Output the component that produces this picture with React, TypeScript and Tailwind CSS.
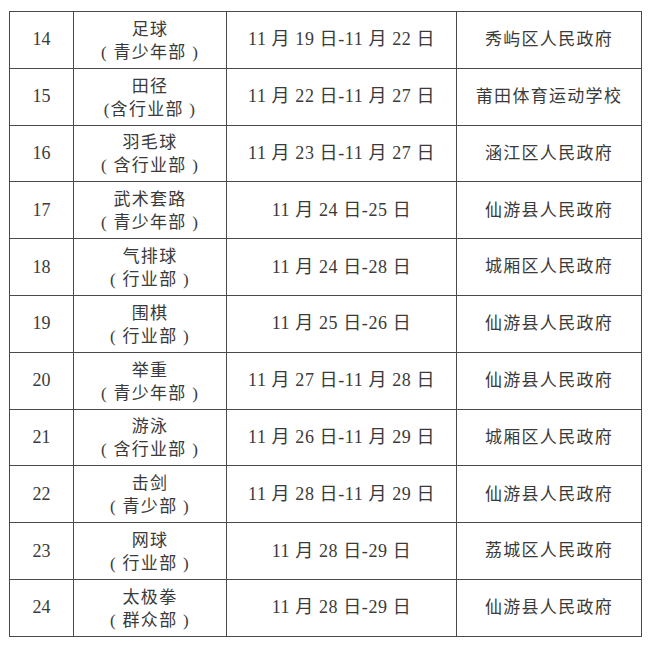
const rows: { no: string; name: string; group: string; date: string; venue: string }[] = [
  { no: '14', name: '足球', group: '( 青少年部 )', date: '11 月 19 日-11 月 22 日', venue: '秀屿区人民政府' },
  { no: '15', name: '田径', group: '(含行业部 )', date: '11 月 22 日-11 月 27 日', venue: '莆田体育运动学校' },
  { no: '16', name: '羽毛球', group: '( 含行业部 )', date: '11 月 23 日-11 月 27 日', venue: '涵江区人民政府' },
  { no: '17', name: '武术套路', group: '( 青少年部 )', date: '11 月 24 日-25 日', venue: '仙游县人民政府' },
  { no: '18', name: '气排球', group: '( 行业部 )', date: '11 月 24 日-28 日', venue: '城厢区人民政府' },
  { no: '19', name: '围棋', group: '( 行业部 )', date: '11 月 25 日-26 日', venue: '仙游县人民政府' },
  { no: '20', name: '举重', group: '( 青少年部 )', date: '11 月 27 日-11 月 28 日', venue: '仙游县人民政府' },
  { no: '21', name: '游泳', group: '( 含行业部 )', date: '11 月 26 日-11 月 29 日', venue: '城厢区人民政府' },
  { no: '22', name: '击剑', group: '( 青少部 )', date: '11 月 28 日-11 月 29 日', venue: '仙游县人民政府' },
  { no: '23', name: '网球', group: '( 行业部 )', date: '11 月 28 日-29 日', venue: '荔城区人民政府' },
  { no: '24', name: '太极拳', group: '( 群众部 )', date: '11 月 28 日-29 日', venue: '仙游县人民政府' },
]

export default function App() {
  return (
    <div className="min-h-[649px] w-[651px] bg-white pt-[11px] pl-[9px] font-['Liberation_Serif','Noto_Sans_CJK_SC',serif] text-[#3a3a3a]">
      <table className="w-[632px] table-fixed border-collapse border-[1.5px] border-[#4a4a4a]">
        <colgroup>
          <col className="w-[64px]" />
          <col className="w-[153px]" />
          <col className="w-[230px]" />
          <col className="w-[185px]" />
        </colgroup>
        <tbody>
          {rows.map((r) => (
            <tr key={r.no} className="h-[56.8px]">
              <td className="border-[1.5px] border-[#4a4a4a] text-center text-[18px]">{r.no}</td>
              <td className="border-[1.5px] border-[#4a4a4a] pt-[2px] text-center text-[17px] leading-[23px] tracking-[1.3px]">
                <div>{r.name}</div>
                <div>{r.group}</div>
              </td>
              <td className="border-[1.5px] border-[#4a4a4a] text-center text-[18px] tracking-[0.6px] whitespace-pre">
                {r.date}
              </td>
              <td className="border-[1.5px] border-[#4a4a4a] text-center text-[17px] tracking-[1.3px]">
                {r.venue}
              </td>
            </tr>
          ))}
        </tbody>
      </table>
    </div>
  )
}
